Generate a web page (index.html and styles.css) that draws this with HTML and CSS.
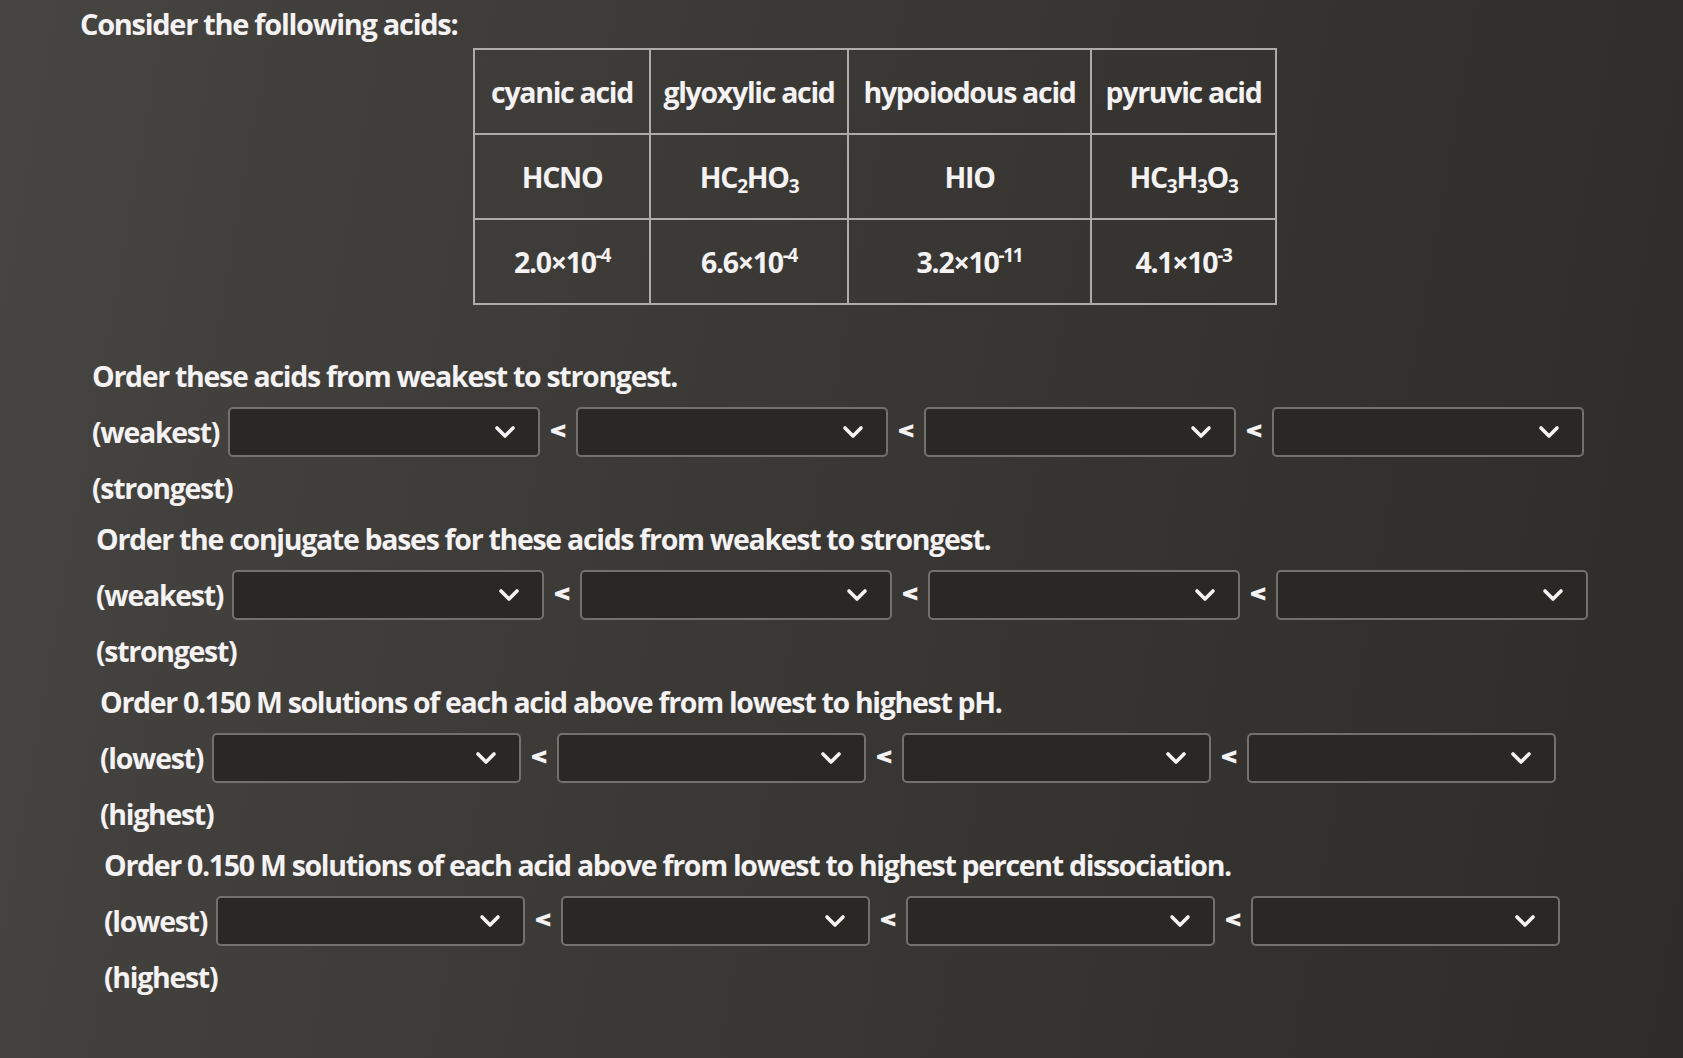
FILE: index.html
```html
<!DOCTYPE html>
<html lang="en">
<head>
<meta charset="utf-8">
<title>Acids</title>
<link rel="stylesheet" href="styles.css">
</head>
<body>
<div class="page">
  <h1 class="title">Consider the following acids:</h1>
  <table class="acids">
    <tr>
      <td class="c1">cyanic acid</td>
      <td class="c2">glyoxylic acid</td>
      <td class="c3">hypoiodous acid</td>
      <td class="c4">pyruvic acid</td>
    </tr>
    <tr>
      <td>HCNO</td>
      <td>HC<sub>2</sub>HO<sub>3</sub></td>
      <td>HIO</td>
      <td>HC<sub>3</sub>H<sub>3</sub>O<sub>3</sub></td>
    </tr>
    <tr>
      <td>2.0×10<sup>-4</sup></td>
      <td>6.6×10<sup>-4</sup></td>
      <td>3.2×10<sup>-11</sup></td>
      <td>4.1×10<sup>-3</sup></td>
    </tr>
  </table>

  <section class="q q1">
    <p class="line">Order these acids from weakest to strongest.</p>
    <div class="line row">
      <span class="lbl">(weakest)</span>
      <div class="sel"><svg class="chev" viewBox="0 0 22 14"><polyline points="3,3 11,11 19,3"/></svg></div>
      <span class="lt">&lt;</span>
      <div class="sel"><svg class="chev" viewBox="0 0 22 14"><polyline points="3,3 11,11 19,3"/></svg></div>
      <span class="lt">&lt;</span>
      <div class="sel"><svg class="chev" viewBox="0 0 22 14"><polyline points="3,3 11,11 19,3"/></svg></div>
      <span class="lt">&lt;</span>
      <div class="sel"><svg class="chev" viewBox="0 0 22 14"><polyline points="3,3 11,11 19,3"/></svg></div>
    </div>
    <p class="line">(strongest)</p>
  </section>

  <section class="q q2">
    <p class="line">Order the conjugate bases for these acids from weakest to strongest.</p>
    <div class="line row">
      <span class="lbl">(weakest)</span>
      <div class="sel"><svg class="chev" viewBox="0 0 22 14"><polyline points="3,3 11,11 19,3"/></svg></div>
      <span class="lt">&lt;</span>
      <div class="sel"><svg class="chev" viewBox="0 0 22 14"><polyline points="3,3 11,11 19,3"/></svg></div>
      <span class="lt">&lt;</span>
      <div class="sel"><svg class="chev" viewBox="0 0 22 14"><polyline points="3,3 11,11 19,3"/></svg></div>
      <span class="lt">&lt;</span>
      <div class="sel"><svg class="chev" viewBox="0 0 22 14"><polyline points="3,3 11,11 19,3"/></svg></div>
    </div>
    <p class="line">(strongest)</p>
  </section>

  <section class="q q3">
    <p class="line">Order 0.150 M solutions of each acid above from lowest to highest pH.</p>
    <div class="line row">
      <span class="lbl">(lowest)</span>
      <div class="sel"><svg class="chev" viewBox="0 0 22 14"><polyline points="3,3 11,11 19,3"/></svg></div>
      <span class="lt">&lt;</span>
      <div class="sel"><svg class="chev" viewBox="0 0 22 14"><polyline points="3,3 11,11 19,3"/></svg></div>
      <span class="lt">&lt;</span>
      <div class="sel"><svg class="chev" viewBox="0 0 22 14"><polyline points="3,3 11,11 19,3"/></svg></div>
      <span class="lt">&lt;</span>
      <div class="sel"><svg class="chev" viewBox="0 0 22 14"><polyline points="3,3 11,11 19,3"/></svg></div>
    </div>
    <p class="line">(highest)</p>
  </section>

  <section class="q q4">
    <p class="line">Order 0.150 M solutions of each acid above from lowest to highest percent dissociation.</p>
    <div class="line row">
      <span class="lbl">(lowest)</span>
      <div class="sel"><svg class="chev" viewBox="0 0 22 14"><polyline points="3,3 11,11 19,3"/></svg></div>
      <span class="lt">&lt;</span>
      <div class="sel"><svg class="chev" viewBox="0 0 22 14"><polyline points="3,3 11,11 19,3"/></svg></div>
      <span class="lt">&lt;</span>
      <div class="sel"><svg class="chev" viewBox="0 0 22 14"><polyline points="3,3 11,11 19,3"/></svg></div>
      <span class="lt">&lt;</span>
      <div class="sel"><svg class="chev" viewBox="0 0 22 14"><polyline points="3,3 11,11 19,3"/></svg></div>
    </div>
    <p class="line">(highest)</p>
  </section>
</div>
</body>
</html>
```

FILE: styles.css
```css
html, body {
  margin: 0;
  padding: 0;
  height: 100%;
}
body {
  background: linear-gradient(100deg, #474541 0%, #3e3c39 30%, #353431 65%, #2d2c29 100%);
  color: #f4f2f2;
  font-family: "Open Sans", "Noto Sans", sans-serif;
  font-weight: 700;
  letter-spacing: -1.3px;
  overflow: hidden;
}
.page {
  padding: 4px 0 0 80px;
}
.title {
  margin: 0;
  font-size: 29px;
  font-weight: 700;
  line-height: 40px;
  height: 44px;
}
.acids {
  margin-left: 393px;
  border-collapse: collapse;
  font-size: 28.5px;
}
.acids td {
  border: 2px solid #aeaca8;
  height: 83px;
  padding: 0;
  text-align: center;
  vertical-align: middle;
}
.acids .c1 { width: 174px; }
.acids .c2 { width: 196px; }
.acids .c3 { width: 241px; }
.acids .c4 { width: 183px; }
.acids sub {
  font-size: 19px;
  vertical-align: -5px;
  line-height: 0;
}
.acids sup {
  font-size: 19px;
  vertical-align: 11px;
  line-height: 0;
}
.q {
  font-size: 28.5px;
}
.q1 { margin-top: 43px; padding-left: 12px; }
.q2 { padding-left: 16px; }
.q3 { padding-left: 20px; }
.q4 { padding-left: 24px; }
.line {
  margin: 0;
  height: 56px;
  line-height: 56px;
}
.q .line:last-child {
  height: 51px;
}
.row {
  display: flex;
  align-items: center;
}
.lbl {
  margin-right: 9px;
}
.sel {
  width: 312px;
  height: 50px;
  box-sizing: border-box;
  border: 2px solid #73716d;
  border-radius: 5px;
  background: #292825;
  display: flex;
  align-items: center;
  justify-content: flex-end;
  padding-right: 22px;
}
.q3 .sel, .q4 .sel { width: 309px; }
.chev {
  width: 22px;
  height: 14px;
}
.chev polyline {
  fill: none;
  stroke: #f4f2f2;
  stroke-width: 3.6;
  stroke-linecap: round;
  stroke-linejoin: round;
}
.lt {
  font-family: "DejaVu Sans", sans-serif;
  font-weight: 700;
  font-size: 20px;
  letter-spacing: 0;
  line-height: 1;
  width: 36px;
  text-align: center;
  margin-top: -4px;
  -webkit-text-stroke: 1.6px #f4f2f2;
}
```
